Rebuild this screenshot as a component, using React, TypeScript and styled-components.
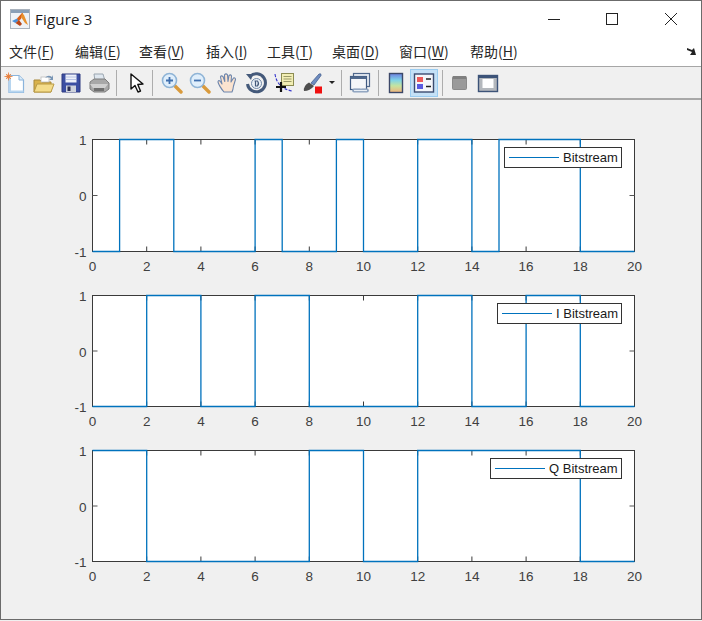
import React from "react";
import styled, {createGlobalStyle} from "styled-components";

const GlobalStyle = createGlobalStyle`
  html, body {
    margin: 0;
    padding: 0;
    background: #f0f0f0;
  }
`;

const StyledWindow = styled.div`
  width: 702px;
  height: 620px;
  box-sizing: border-box;
  border: 1px solid #6b6b6b;
  display: flex;
  flex-direction: column;
  background: #f0f0f0;
  overflow: hidden;
`;

const StyledTitleBar = styled.div`
  height: 37px;
  flex: none;
  box-sizing: border-box;
  display: flex;
  align-items: center;
  background: #fff;
  padding: 0 1px 2px 9px;
`;

const StyledTitle = styled.div`
  margin-left: 5px;
  font: 15px "Open Sans", "Noto Sans", sans-serif;
  letter-spacing: 0.2px;
  color: #1a1a1a;
  flex: 1;
`;

const StyledWindowButton = styled.div`
  width: 58.5px;
  height: 35px;
  display: flex;
  align-items: center;
  justify-content: center;
`;

const StyledMenuBar = styled.div`
  height: 28px;
  flex: none;
  box-sizing: border-box;
  display: flex;
  align-items: center;
  background: #fff;
  border-bottom: 1px solid #a6a6a6;
  padding: 0 0 2px 8px;
  height: 29px;
  position: relative;
`;

const StyledMenuItem = styled.div<{$width: number}>`
  width: ${props => props.$width}px;
  font: 14px "Noto Sans CJK SC", "Liberation Sans", sans-serif;
  line-height: 20px;
  color: #262626;
  white-space: nowrap;
  u {
    text-underline-offset: 2px;
  }
`;

const StyledCorner = styled.svg`
  position: absolute;
  right: 4px;
  top: 9px;
`;

const StyledToolbar = styled.div`
  height: 33px;
  flex: none;
  box-sizing: border-box;
  display: flex;
  align-items: center;
  background: #f0f0f0;
  border-bottom: 2px solid #a8a8a8;
`;

const StyledToolButton = styled.div<{$active?: boolean}>`
  width: 28px;
  height: 28px;
  box-sizing: border-box;
  display: flex;
  align-items: center;
  justify-content: center;
  background: ${props => props.$active ? "#c4e0f6" : "transparent"};
  border: 1px solid ${props => props.$active ? "#9accf0" : "transparent"};
  svg {
    filter: blur(0.35px);
  }
`;

const StyledDropArrow = styled.div`
  width: 12px;
  height: 28px;
  display: flex;
  align-items: center;
  justify-content: center;
  &::after {
    content: "";
    border-left: 3px solid transparent;
    border-right: 3px solid transparent;
    border-top: 3px solid #222;
  }
`;

const StyledSeparator = styled.div<{$left: number; $right: number}>`
  width: 1px;
  height: 26px;
  background: #adadad;
  margin-left: ${props => props.$left}px;
  margin-right: ${props => props.$right}px;
`;

const StyledFigure = styled.div`
  flex: 1;
  display: flex;
  flex-direction: column;
  padding-top: 29px;
  background: #f0f0f0;
`;

const StyledChart = styled.div<{$height: number}>`
  position: relative;
  height: ${props => props.$height}px;
`;

const StyledLegend = styled.div<{$width: number}>`
  position: absolute;
  top: 18px;
  left: ${props => 621 - props.$width}px;
  width: ${props => props.$width}px;
  height: 21px;
  box-sizing: border-box;
  border: 1px solid #333;
  background: #fff;
  display: flex;
  align-items: center;
  padding-left: 4px;
  font: 13px "Liberation Sans", Arial, sans-serif;
  color: #1a1a1a;
`;

const StyledLegendLine = styled.div`
  width: 50px;
  height: 1px;
  flex: none;
  background: #0072bd;
  margin-right: 4px;
`;

const StyledLegendLabel = styled.div`
  flex: 1;
  text-align: right;
  padding-right: 4px;
  white-space: nowrap;
`;

const StyledAxisText = styled.text`
  font: 13.5px "Liberation Sans", Arial, sans-serif;
  fill: #404040;
`;

const PLOT_LEFT = 91.5;
const PLOT_WIDTH = 542;
const PLOT_TOP = 10.5;

const sx = (v: number) => PLOT_LEFT + (v / 20) * PLOT_WIDTH;

const xTicks = [0, 2, 4, 6, 8, 10, 12, 14, 16, 18, 20];

type Level = [number, number];

const charts: Array<{label: string; legendWidth: number; height: number; plotHeight: number; levels: Level[]}> = [
    {
        label: "Bitstream",
        legendWidth: 118,
        height: 156,
        plotHeight: 112,
        levels: [[0, -1], [1, 1], [3, -1], [6, 1], [7, -1], [9, 1], [10, -1], [12, 1], [14, -1], [15, 1], [18, -1]],
    },
    {
        label: "I Bitstream",
        legendWidth: 125,
        height: 155,
        plotHeight: 111,
        levels: [[0, -1], [2, 1], [4, -1], [6, 1], [8, -1], [12, 1], [14, -1], [16, 1], [18, -1]],
    },
    {
        label: "Q Bitstream",
        legendWidth: 132,
        height: 155,
        plotHeight: 111,
        levels: [[0, 1], [2, -1], [8, 1], [10, -1], [12, 1], [18, -1]],
    },
];

function Chart({label, levels, height, plotHeight, legendWidth}: {label: string; levels: Level[]; height: number; plotHeight: number; legendWidth: number}) {
    const sy = (v: number) => PLOT_TOP + ((1 - v) / 2) * plotHeight;

    let path = "";
    levels.forEach(([t, level], i) => {
        const next = i + 1 < levels.length ? levels[i + 1][0] : 20;
        path += `${i === 0 ? "M" : "L"}${sx(t)} ${sy(level)} L${sx(next)} ${sy(level)} `;
    });

    return (
        <StyledChart $height={height}>
            <svg width="700" height={height}>
                <rect x={sx(0)} y={sy(1)} width={PLOT_WIDTH} height={plotHeight} fill="#fff" stroke="#3a3a3a" />
                {xTicks.map(t => (
                    <g key={t} stroke="#3a3a3a">
                        <line x1={sx(t)} x2={sx(t)} y1={sy(1)} y2={sy(1) + 5} />
                        <line x1={sx(t)} x2={sx(t)} y1={sy(-1)} y2={sy(-1) - 5} />
                    </g>
                ))}
                <line x1={sx(0)} x2={sx(0) + 5} y1={sy(0)} y2={sy(0)} stroke="#555" />
                <line x1={sx(20)} x2={sx(20) - 5} y1={sy(0)} y2={sy(0)} stroke="#555" />
                <path d={path} fill="none" stroke="#0072bd" strokeWidth="1.3" />
                {xTicks.map(t => (
                    <StyledAxisText key={t} x={sx(t)} y={sy(-1) + 19} textAnchor="middle">{t}</StyledAxisText>
                ))}
                <StyledAxisText x={85.5} y={sy(1) + 5.5} textAnchor="end">1</StyledAxisText>
                <StyledAxisText x={85.5} y={sy(0) + 5.5} textAnchor="end">0</StyledAxisText>
                <StyledAxisText x={85.5} y={sy(-1) + 5.5} textAnchor="end">-1</StyledAxisText>
            </svg>
            <StyledLegend $width={legendWidth}>
                <StyledLegendLine />
                <StyledLegendLabel>{label}</StyledLegendLabel>
            </StyledLegend>
        </StyledChart>
    );
}

const Icon = ({children}: {children: React.ReactNode}) => (
    <svg width="24" height="24" viewBox="0 0 24 24">{children}</svg>
);

const MatlabLogo = () => (
    <svg width="20" height="20" viewBox="0 0 20 20">
        <rect x="0.5" y="0.5" width="19" height="19" fill="#eef2f7" stroke="#a9b2bd" />
        <rect x="1" y="1" width="18" height="3" fill="#8aa0b8" />
        <path d="M2 12 L7 9.5 L9 11 L5.5 14 Z" fill="#4a90d9" />
        <path d="M7 9.5 L12 4 L13 4 L11 10 L8.5 12 Z" fill="#d9601a" />
        <path d="M12 4 L14 6 L18 16 L15 14 L11 8 Z" fill="#e8912d" />
        <path d="M5.5 14 L9 11 L12 15 L10 17 Z" fill="#b8461a" />
    </svg>
);

const NewIcon = () => (
    <Icon>
        <path d="M6 4.5 H16 L20.5 9 V21.5 H6 Z" fill="#fff" stroke="#8bb4dc" strokeWidth="1.2" />
        <path d="M16 4.5 V9 H20.5" fill="#dcecf9" stroke="#8bb4dc" />
        <path d="M6 7 V21.5 H20.5 V19.5 H8 V7 Z" fill="#b7d5ef" />
        <circle cx="5.5" cy="5.5" r="2.3" fill="#f3a66a" />
        <path d="M5.5 1.5 V9.5 M1.5 5.5 H9.5 M3 3 L8 8 M8 3 L3 8" stroke="#e57a3a" strokeWidth="0.8" />
    </Icon>
);

const OpenIcon = () => (
    <Icon>
        <path d="M3 9 H9 L11 11 H20 V21 H3 Z" fill="#d9b24c" stroke="#a8883a" />
        <rect x="10" y="6" width="8" height="5" fill="#fff" stroke="#b5b5b5" strokeWidth="0.7" />
        <path d="M14 7 Q17 3 21 6 L22 4 V9 H18 L20 7.5 Q17 5.5 14 7 Z" fill="#7895b5" />
        <path d="M3 21 L6 13 H23 L20 21 Z" fill="#f4dc8a" stroke="#b99a45" />
    </Icon>
);

const SaveIcon = () => (
    <Icon>
        <path d="M3 3 H21 V21 H3 Z" fill="#3c4fa3" stroke="#2e3a80" />
        <rect x="6.5" y="3.5" width="11" height="8" fill="#eef1fa" />
        <path d="M7 6 H17 M7 8.5 H17" stroke="#b8c4e4" />
        <rect x="7" y="14.5" width="10" height="6.5" fill="#cfd3dd" />
        <rect x="8.5" y="15.5" width="3" height="4.5" fill="#2b2f55" />
    </Icon>
);

const PrintIcon = () => (
    <Icon>
        <path d="M7 3 H16 L18 10 H8 Z" fill="#dfe7ef" stroke="#9ba6b0" />
        <path d="M3 11 L7 8 H18 L22 12 V18 L18 21 H7 L3 18 Z" fill="#a8a8a8" stroke="#7d7d7d" />
        <path d="M3 13 H21 L18 17 H6 Z" fill="#d0d0d0" />
        <rect x="7" y="17" width="10" height="3" fill="#6f6f6f" />
    </Icon>
);

const PointerIcon = () => (
    <Icon>
        <path d="M6 3 V18 L10 14.5 L13 21 L15.5 20 L12.8 13.5 L18 13 Z" fill="#fff" stroke="#111" strokeWidth="1.4" strokeLinejoin="round" />
    </Icon>
);

const ZoomIcon = ({plus}: {plus: boolean}) => (
    <Icon>
        <path d="M14.5 14.5 L21 21" stroke="#d99a3c" strokeWidth="3.4" strokeLinecap="round" />
        <circle cx="9.5" cy="9.5" r="7" fill="#dfeefb" stroke="#8fb4d6" strokeWidth="1.6" />
        <path d={plus ? "M6 9.5 H13 M9.5 6 V13" : "M6 9.5 H13"} stroke="#3f6fae" strokeWidth="1.8" />
    </Icon>
);

const HandIcon = () => (
    <Icon>
        <path
            d="M8 21 Q3 15 2 11 Q2 9 4 10 L6 13 L4.5 6 Q5 4 7 5.5 L8.8 10.5 L8.5 3.8 Q10 2 11.5 3.8 L12 10.5 L13 4.5 Q14.8 3 15.5 5 L15 11 L17.5 7 Q19.5 6.5 19.5 8.5 L17.5 15 Q17 19 16 21 Z"
            fill="#fbe3cf"
            stroke="#6d86ad"
            strokeWidth="1.1"
            strokeLinejoin="round"
        />
    </Icon>
);

const RotateIcon = () => (
    <Icon>
        <path d="M6 5.5 A9 9 0 1 1 3.5 13" fill="none" stroke="#44597a" strokeWidth="3" />
        <path d="M2 3 L9 3 L7 9 Z" fill="#44597a" />
        <circle cx="12.5" cy="12.5" r="5" fill="#eaf0f6" stroke="#6f86a6" />
        <path d="M10.5 10 H13.5 Q15.5 12.5 13.5 15 H11.5 V10" fill="none" stroke="#44597a" strokeWidth="1.2" />
    </Icon>
);

const DataCursorIcon = () => (
    <Icon>
        <path d="M3 3 Q5 17 20 20" fill="none" stroke="#3333cc" strokeWidth="1.1" strokeDasharray="3 1.5" />
        <rect x="9.5" y="2.5" width="12" height="12" fill="#f2eeb4" stroke="#8c8c52" />
        <path d="M11.5 5.5 H19.5 M11.5 8 H19.5 M11.5 10.5 H19.5" stroke="#9a9a6a" />
        <path d="M9 11 V21 M4 16 H14" stroke="#111" strokeWidth="2.2" />
    </Icon>
);

const BrushIcon = () => (
    <Icon>
        <path d="M11 12 L19 3 Q21.5 2 21 4.5 L14 14 Z" fill="#6f8cc0" stroke="#46618f" strokeWidth="0.8" />
        <path d="M4 20 Q3 15 9 11.5 L14 15 Q10 20 4 20 Z" fill="#4e4e4e" />
        <rect x="15" y="15.5" width="7" height="7" fill="#f01010" />
    </Icon>
);

const LinkIcon = () => (
    <Icon>
        <rect x="5.5" y="2.5" width="16" height="13" fill="#e9eef4" stroke="#50688c" strokeWidth="1.2" />
        <rect x="2.5" y="5.5" width="16" height="13" fill="#f4f6f9" stroke="#3f5a82" strokeWidth="1.2" />
        <rect x="2.5" y="5.5" width="16" height="2.5" fill="#50688c" />
        <path d="M6 19.5 H12 M14 19.5 H19" stroke="#8ba0bd" strokeWidth="3.8" strokeLinecap="round" />
        <path d="M6 19.5 H19" stroke="#e8eef5" strokeWidth="1.2" />
    </Icon>
);

const ColorbarIcon = () => (
    <Icon>
        <defs>
            <linearGradient id="colorbarFill" x1="0" y1="0" x2="0" y2="1">
                <stop offset="0" stopColor="#6d7fe0" />
                <stop offset="0.35" stopColor="#7fd4e8" />
                <stop offset="0.65" stopColor="#c5e4a0" />
                <stop offset="1" stopColor="#f2b37c" />
            </linearGradient>
        </defs>
        <rect x="5.5" y="2.5" width="13" height="19" fill="url(#colorbarFill)" stroke="#3c4868" strokeWidth="1.4" />
    </Icon>
);

const LegendIcon = () => (
    <Icon>
        <rect x="2.5" y="3" width="19" height="18" fill="#f4f6fa" stroke="#3c4c70" strokeWidth="1.4" />
        <rect x="5" y="6" width="6" height="5" fill="#ee5a5a" />
        <rect x="5" y="13" width="6" height="5" fill="#5a5ae0" />
        <path d="M14 8 H19 M14 15.5 H19" stroke="#222" strokeWidth="1.4" />
    </Icon>
);

const PanelIcon = () => (
    <Icon>
        <rect x="4.5" y="5.5" width="14" height="13" rx="1" fill="#9a9a9a" stroke="#8a8a8a" />
        <rect x="5" y="5" width="13" height="3" fill="#7f7f7f" />
    </Icon>
);

const FrameIcon = () => (
    <Icon>
        <rect x="2.5" y="4.5" width="19" height="16" fill="#b4b8bd" stroke="#3c5378" strokeWidth="1.4" />
        <rect x="2.5" y="4.5" width="19" height="2.5" fill="#3c5378" />
        <rect x="6.5" y="8" width="11" height="9" fill="#fff" />
    </Icon>
);

const menuItems: Array<[string, string, number]> = [
    ["文件", "F", 66],
    ["编辑", "E", 64],
    ["查看", "V", 67],
    ["插入", "I", 61],
    ["工具", "T", 65],
    ["桌面", "D", 67],
    ["窗口", "W", 71],
    ["帮助", "H", 60],
];

export default function App() {
    return (
        <>
            <GlobalStyle />
            <StyledWindow>
                <StyledTitleBar>
                    <MatlabLogo />
                    <StyledTitle>Figure 3</StyledTitle>
                    <StyledWindowButton>
                        <svg width="14" height="14"><path d="M1 7.5 H13" stroke="#222" /></svg>
                    </StyledWindowButton>
                    <StyledWindowButton>
                        <svg width="14" height="14"><rect x="1.5" y="1.5" width="11" height="11" fill="none" stroke="#222" /></svg>
                    </StyledWindowButton>
                    <StyledWindowButton>
                        <svg width="14" height="14"><path d="M1 1 L13 13 M13 1 L1 13" stroke="#222" /></svg>
                    </StyledWindowButton>
                </StyledTitleBar>
                <StyledMenuBar>
                    {menuItems.map(([name, key, width]) => (
                        <StyledMenuItem key={name} $width={width}>{name}(<u>{key}</u>)</StyledMenuItem>
                    ))}
                    <StyledCorner width="10" height="9" viewBox="0 0 10 9">
                        <path d="M0 1 L5 3 L7 1 L9 8 L3 8 L5 5 L0 3 Z" fill="#222" />
                    </StyledCorner>
                </StyledMenuBar>
                <StyledToolbar>
                    <StyledToolButton><NewIcon /></StyledToolButton>
                    <StyledToolButton><OpenIcon /></StyledToolButton>
                    <StyledToolButton><SaveIcon /></StyledToolButton>
                    <StyledToolButton><PrintIcon /></StyledToolButton>
                    <StyledSeparator $left={3} $right={6} />
                    <StyledToolButton><PointerIcon /></StyledToolButton>
                    <StyledSeparator $left={1} $right={5} />
                    <StyledToolButton><ZoomIcon plus /></StyledToolButton>
                    <StyledToolButton><ZoomIcon plus={false} /></StyledToolButton>
                    <StyledToolButton><HandIcon /></StyledToolButton>
                    <StyledToolButton><RotateIcon /></StyledToolButton>
                    <StyledToolButton><DataCursorIcon /></StyledToolButton>
                    <StyledToolButton><BrushIcon /></StyledToolButton>
                    <StyledDropArrow />
                    <StyledSeparator $left={3} $right={4} />
                    <StyledToolButton><LinkIcon /></StyledToolButton>
                    <StyledSeparator $left={4} $right={3} />
                    <StyledToolButton><ColorbarIcon /></StyledToolButton>
                    <StyledToolButton $active><LegendIcon /></StyledToolButton>
                    <StyledSeparator $left={4} $right={3} />
                    <StyledToolButton><PanelIcon /></StyledToolButton>
                    <StyledToolButton><FrameIcon /></StyledToolButton>
                </StyledToolbar>
                <StyledFigure>
                    {charts.map(chart => (
                        <Chart
                            key={chart.label}
                            label={chart.label}
                            levels={chart.levels}
                            height={chart.height}
                            plotHeight={chart.plotHeight}
                            legendWidth={chart.legendWidth}
                        />
                    ))}
                </StyledFigure>
            </StyledWindow>
        </>
    );
}
